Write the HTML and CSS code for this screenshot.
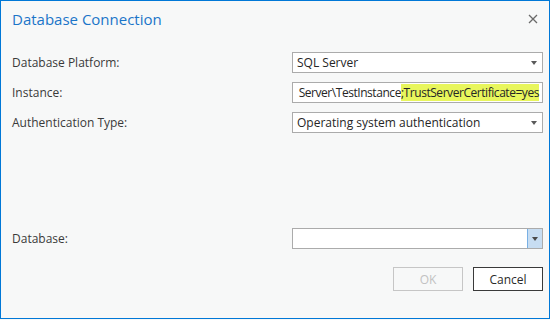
FILE: index.html
```html
<!DOCTYPE html>
<html lang="en">
<head>
  <meta charset="UTF-8">
  <title>Database Connection</title>
  <link rel="stylesheet" href="styles.css">
</head>
<body>
  <div class="dialog">
    <div class="dialog-header">
      <h1 class="dialog-title">Database Connection</h1>
      <button class="close-btn" aria-label="Close">
        <svg width="10" height="10" viewBox="0 0 10 10">
          <path d="M1 1 L9 9 M9 1 L1 9" stroke="#6a6a6a" stroke-width="1.3" fill="none"/>
        </svg>
      </button>
    </div>

    <div class="form">
      <div class="form-row">
        <label class="form-label">Database Platform:</label>
        <div class="field select">
          <span class="field-text">SQL Server</span>
          <span class="arrow"><svg width="6" height="4" viewBox="0 0 6 4"><path d="M0 0 H6 L3 4 Z" fill="#5a5a5a"/></svg></span>
        </div>
      </div>

      <div class="form-row">
        <label class="form-label">Instance:</label>
        <div class="field input">
          <span class="field-text scrolled">Server\TestInstance<mark class="highlight">;TrustServerCertificate=yes</mark></span>
        </div>
      </div>

      <div class="form-row">
        <label class="form-label">Authentication Type:</label>
        <div class="field select">
          <span class="field-text">Operating system authentication</span>
          <span class="arrow"><svg width="6" height="4" viewBox="0 0 6 4"><path d="M0 0 H6 L3 4 Z" fill="#5a5a5a"/></svg></span>
        </div>
      </div>
    </div>

    <div class="spacer"></div>

    <div class="form">
      <div class="form-row">
        <label class="form-label">Database:</label>
        <div class="field combo">
          <span class="field-text"></span>
          <span class="combo-btn"><svg width="6" height="4" viewBox="0 0 6 4"><path d="M0 0 H6 L3 4 Z" fill="#4a4a4a"/></svg></span>
        </div>
      </div>
    </div>

    <div class="dialog-footer">
      <button class="btn btn-disabled" disabled>OK</button>
      <button class="btn btn-default">Cancel</button>
    </div>
  </div>
</body>
</html>
```

FILE: styles.css
```css
:root {
  --accent: #0078d7;
  --title-color: #1b75c8;
  --dialog-bg: #f7f8f8;
  --text-color: #3a3a3a;
  --field-border: #ababab;
}

html, body {
  margin: 0;
  padding: 0;
  height: 100%;
}

body {
  font-family: "Open Sans", "Noto Sans", sans-serif;
  font-size: 12px;
  color: var(--text-color);
  background-color: var(--dialog-bg);
}

.dialog {
  box-sizing: border-box;
  width: 550px;
  height: 319px;
  border: 1px solid var(--accent);
  background-color: var(--dialog-bg);
  display: flex;
  flex-direction: column;
  padding: 0 6px 0 11px;
}

.dialog-header {
  display: flex;
  justify-content: space-between;
  align-items: center;
  height: 36px;
}

.dialog-title {
  margin: 0;
  font-size: 15px;
  font-weight: normal;
  color: var(--title-color);
}

.close-btn {
  border: none;
  background: none;
  padding: 0;
  margin-right: 5px;
  width: 10px;
  height: 10px;
  display: flex;
}

.form {
  display: flex;
  flex-direction: column;
  gap: 9px;
}

.dialog-header + .form {
  margin-top: 15px;
}

.form-row {
  display: grid;
  grid-template-columns: 280px 1fr;
  align-items: center;
  height: 21px;
}

.form-label {
  color: var(--text-color);
}

.field {
  box-sizing: border-box;
  height: 21px;
  border: 1px solid var(--field-border);
  background-color: white;
  display: flex;
  align-items: center;
  overflow: hidden;
  color: #262626;
}

.field-text {
  flex: 1;
  padding-left: 4px;
  white-space: nowrap;
  overflow: hidden;
}

/* long text scrolled to its end, as in a focused input */
.field.input {
  justify-content: flex-end;
}

.field-text.scrolled {
  flex: none;
  overflow: visible;
  padding-left: 0;
  padding-right: 3px;
  letter-spacing: -0.45px;
}

.highlight {
  background-color: #e8f65c;
  color: #262626;
}

.arrow {
  width: 16px;
  display: flex;
  justify-content: center;
}

.combo-btn {
  box-sizing: border-box;
  width: 16px;
  height: 21px;
  margin: -1px -1px -1px 0;
  background-color: #c7ddf2;
  border: 1px solid #79b0e4;
  display: flex;
  align-items: center;
  justify-content: center;
}

.spacer {
  flex: 1;
}

.dialog-footer {
  display: flex;
  justify-content: flex-end;
  gap: 10px;
  margin-top: 18px;
  margin-bottom: 27px;
}

.btn {
  box-sizing: border-box;
  width: 70px;
  height: 24px;
  font-family: inherit;
  font-size: 12px;
  padding: 0;
}

.btn-disabled {
  border: 1px solid #c6c6c6;
  background-color: var(--dialog-bg);
  color: #c2c2c2;
}

.btn-default {
  border: 1px solid #3a3a3a;
  background-color: white;
  color: #2a2a2a;
}
```
